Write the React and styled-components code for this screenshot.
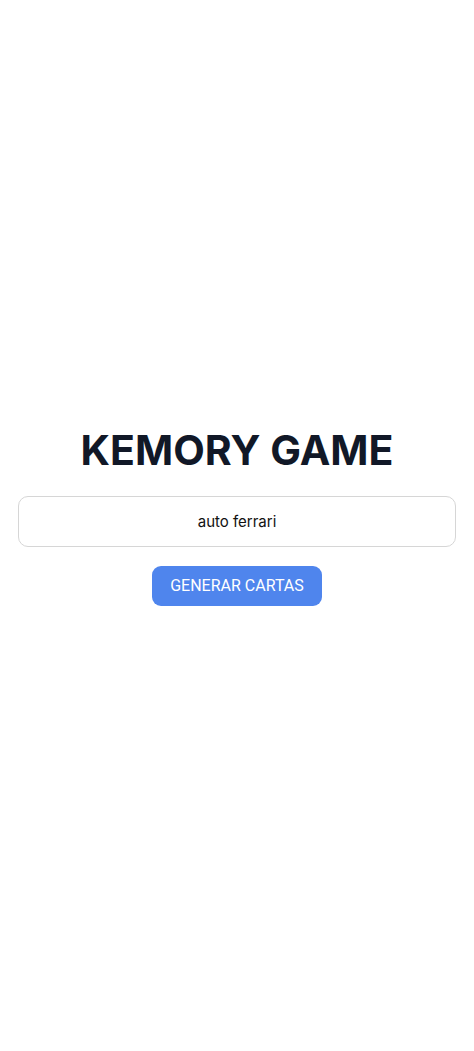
import styled, { createGlobalStyle } from 'styled-components';

const GlobalStyle = createGlobalStyle`
  body {
    margin: 0;
    background: #ffffff;
    font-family: Inter, "Noto Sans", sans-serif;
  }
`;

// Full-height page, content a bit above the middle
const Page = styled.main`
  min-height: 100vh;
  box-sizing: border-box;
  display: flex;
  flex-direction: column;
  align-items: center;
  justify-content: center;
  padding: 0 18px 20px;
`;

const Title = styled.h1`
  margin: 0 0 22px;
  font-size: 41px;
  line-height: 48px;
  font-weight: 700;
  color: #111827;
  letter-spacing: 0;
`;

const SearchInput = styled.input`
  box-sizing: border-box;
  width: 100%;
  height: 51px;
  border: 1.5px solid #d6d6d6;
  border-radius: 10px;
  background: #fff;
  text-align: center;
  font-family: Inter, "Noto Sans", sans-serif;
  font-size: 15px;
  color: #111;
  outline: none;
`;

const GenerateButton = styled.button`
  margin-top: 19px;
  height: 40px;
  padding: 0 18px;
  border: none;
  border-radius: 9px;
  background: #4f85ed;
  color: #fff;
  font-family: Roboto, "Noto Sans", sans-serif;
  font-size: 16px;
  text-transform: uppercase;
  cursor: pointer;
`;

function App() {
  return (
    <>
      <GlobalStyle />
      <Page>
        <Title>KEMORY GAME</Title>
        <SearchInput defaultValue="auto ferrari" />
        <GenerateButton>Generar cartas</GenerateButton>
      </Page>
    </>
  );
}

export default App;
